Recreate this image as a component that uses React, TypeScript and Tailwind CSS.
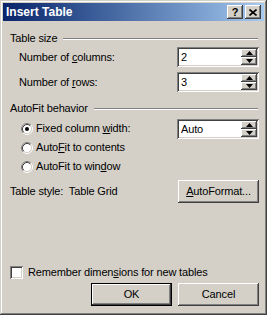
import type { ReactNode } from 'react';

const sunken = 'shadow-[inset_1px_1px_#808080,inset_-1px_-1px_#ffffff,inset_2px_2px_#404040,inset_-2px_-2px_#d4d0c8]';
const raised = 'shadow-[inset_-1px_-1px_#404040,inset_1px_1px_#ffffff,inset_-2px_-2px_#808080,inset_2px_2px_#d4d0c8]';

function GroupHeader({ title }: { title: string }): JSX.Element {
    return (
        <div className="flex h-[13px] items-center">
            <span className="leading-[13px]">{title}</span>
            <div className="ml-[6px] mr-[1px] h-[2px] flex-1 border-t border-b border-t-[#808080] border-b-white" />
        </div>
    );
}

function SpinArrow({ up }: { up?: boolean }): JSX.Element {
    return (
        <div className={`flex h-[8px] w-[16px] items-center justify-center bg-[#d4d0c8] ${raised}`}>
            <svg width="7" height="4" viewBox="0 0 7 4">
                {up ? <path d="M3.5 0 L7 4 L0 4 Z" fill="#000" /> : <path d="M0 0 L7 0 L3.5 4 Z" fill="#000" />}
            </svg>
        </div>
    );
}

function Spinner({ value }: { value: string }): JSX.Element {
    return (
        <div className={`flex h-[20px] w-[82px] items-stretch bg-white p-[2px] ${sunken}`}>
            <span className="flex-1 pl-[2px] leading-[16px]">{value}</span>
            <div className="flex flex-col">
                <SpinArrow up />
                <SpinArrow />
            </div>
        </div>
    );
}

function Radio({ checked, children }: { checked?: boolean; children: ReactNode }): JSX.Element {
    return (
        <div className="flex items-center gap-[3px]">
            <svg width="12" height="12" viewBox="0 0 12 12">
                <circle cx="6" cy="6" r="4.5" fill="#fff" />
                <path d="M2.11 9.89 A5.5 5.5 0 0 1 9.89 2.11" stroke="#808080" fill="none" />
                <path d="M9.89 2.11 A5.5 5.5 0 0 1 2.11 9.89" stroke="#fff" fill="none" />
                <path d="M2.82 9.18 A4.5 4.5 0 0 1 9.18 2.82" stroke="#404040" fill="none" />
                <path d="M9.18 2.82 A4.5 4.5 0 0 1 2.82 9.18" stroke="#d4d0c8" fill="none" />
                {checked && <circle cx="6" cy="6" r="2" fill="#000" />}
            </svg>
            <span>{children}</span>
        </div>
    );
}

function Button({ children, isDefault }: { children: ReactNode; isDefault?: boolean }): JSX.Element {
    return (
        <div className={`h-[23px] w-[81px] ${isDefault ? 'border border-black' : ''}`}>
            <div className={`flex h-full w-full items-center justify-center bg-[#d4d0c8] ${raised}`}>{children}</div>
        </div>
    );
}

export default function App(): JSX.Element {
    return (
        <div className={`h-[315px] w-[267px] bg-[#d4d0c8] p-[3px] font-['Liberation_Sans',Arial,sans-serif] text-[11px] tracking-[-0.15px] text-black shadow-[inset_-1px_-1px_#404040,inset_1px_1px_#d4d0c8,inset_-2px_-2px_#808080,inset_2px_2px_#ffffff]`}>
            <div className="flex h-[18px] items-center justify-between bg-gradient-to-r from-[#0a246a] to-[#a6caf0] pl-[3px] pr-[3px]">
                <span className="text-[12px] font-bold tracking-normal text-white">Insert Table</span>
                <div className="flex gap-[2px]">
                    <div className={`flex h-[14px] w-[16px] items-center justify-center bg-[#d4d0c8] text-[11px] font-bold leading-none ${raised}`}>?</div>
                    <div className={`flex h-[14px] w-[16px] items-center justify-center bg-[#d4d0c8] ${raised}`}>
                        <svg width="8" height="7" viewBox="0 0 8 7">
                            <path d="M0.5 0.5 L7.5 6.5 M7.5 0.5 L0.5 6.5" stroke="#000" strokeWidth="1.6" />
                        </svg>
                    </div>
                </div>
            </div>

            <div className="pl-[7px] pr-[5px]">
                <div className="mt-[11px]">
                    <GroupHeader title="Table size" />
                </div>
                <div className="mt-[2px] flex h-[20px] items-center justify-between pl-[9px]">
                    <span>Number of <u>c</u>olumns:</span>
                    <Spinner value="2" />
                </div>
                <div className="mt-[5px] flex h-[20px] items-center justify-between pl-[9px]">
                    <span>Number of <u>r</u>ows:</span>
                    <Spinner value="3" />
                </div>

                <div className="mt-[10px]">
                    <GroupHeader title="AutoFit behavior" />
                </div>
                <div className="mt-[4px] flex h-[19px] items-center justify-between pl-[11px]">
                    <Radio checked>Fixed column <u>w</u>idth:</Radio>
                    <Spinner value="Auto" />
                </div>
                <div className="flex h-[19px] items-center pl-[11px]">
                    <Radio>Auto<u>F</u>it to contents</Radio>
                </div>
                <div className="flex h-[19px] items-center pl-[11px]">
                    <Radio>AutoFit to win<u>d</u>ow</Radio>
                </div>
                <div className="mt-[4px] flex h-[23px] items-center justify-between">
                    <span className="whitespace-pre">Table style:  Table Grid</span>
                    <Button><span><u>A</u>utoFormat...</span></Button>
                </div>

                <div className="mt-[63px] flex h-[13px] items-center gap-[5px]">
                    <div className={`h-[13px] w-[13px] bg-white ${sunken}`} />
                    <span>Remember dimen<u>s</u>ions for new tables</span>
                </div>
                <div className="mt-[4px] flex justify-end gap-[6px]">
                    <Button isDefault>OK</Button>
                    <Button>Cancel</Button>
                </div>
            </div>
        </div>
    );
}
